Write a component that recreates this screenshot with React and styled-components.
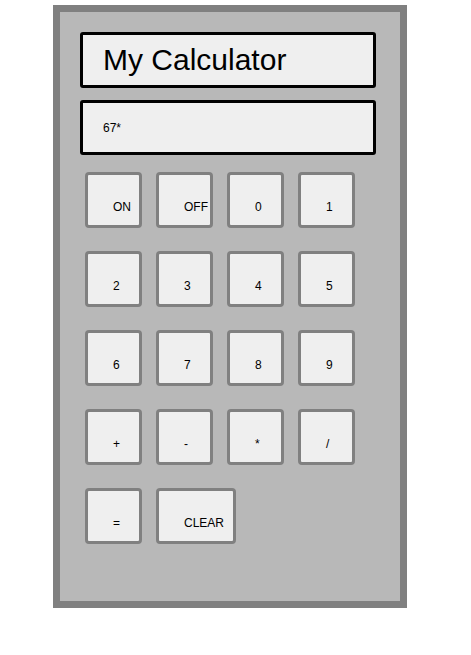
import React from 'react';
import styled, { createGlobalStyle } from 'styled-components';

const GlobalStyle = createGlobalStyle`
  *, *::before, *::after {
    box-sizing: border-box;
  }

  body {
    margin: 0;
    background: #ffffff;
    font-family: "Liberation Sans", Arial, sans-serif;
  }
`;

const Body = styled.div`
  width: 354px;
  height: 603px;
  margin: 5px 0 0 53px;
  padding: 20px 24px 0 20px;
  border: 7px solid #808080;
  background-color: #b8b8b8;
  display: flex;
  flex-direction: column;
`;

const Screen = styled.div`
  display: flex;
  align-items: center;
  height: ${(p) => p.$height}px;
  margin-bottom: ${(p) => p.$gap || 0}px;
  padding-left: 20px;
  border: 3px solid #000000;
  border-radius: 3px;
  background-color: #efefef;
  color: #000000;
  font-size: ${(p) => p.$size}px;
`;

const Keypad = styled.div`
  display: flex;
  flex-wrap: wrap;
  gap: 23px 14px;
  width: 270px;
  margin: 17px 0 0 5px;
`;

const Key = styled.button`
  display: flex;
  align-items: flex-start;
  justify-content: flex-start;
  width: ${(p) => (p.$wide ? 80 : 57)}px;
  height: 56px;
  margin: 0;
  padding: 25px 0 0 25px;
  border: 3px solid #808080;
  border-radius: 4px;
  background-color: #efefef;
  color: #000000;
  font-family: "Liberation Sans", Arial, sans-serif;
  font-size: 12px;
  line-height: 14px;
  white-space: nowrap;
  cursor: pointer;
`;

const keys = ['ON', 'OFF', '0', '1', '2', '3', '4', '5', '6', '7', '8', '9', '+', '-', '*', '/', '=', 'CLEAR'];

export default function App() {
  return (
    <>
      <GlobalStyle />
      <Body>
        <Screen $height={56} $gap={12} $size={30}>My Calculator</Screen>
        <Screen $height={55} $size={12}>67*</Screen>

        <Keypad>
          {keys.map((k) => (
            <Key key={k} $wide={k === 'CLEAR'}>{k}</Key>
          ))}
        </Keypad>
      </Body>
    </>
  );
}
